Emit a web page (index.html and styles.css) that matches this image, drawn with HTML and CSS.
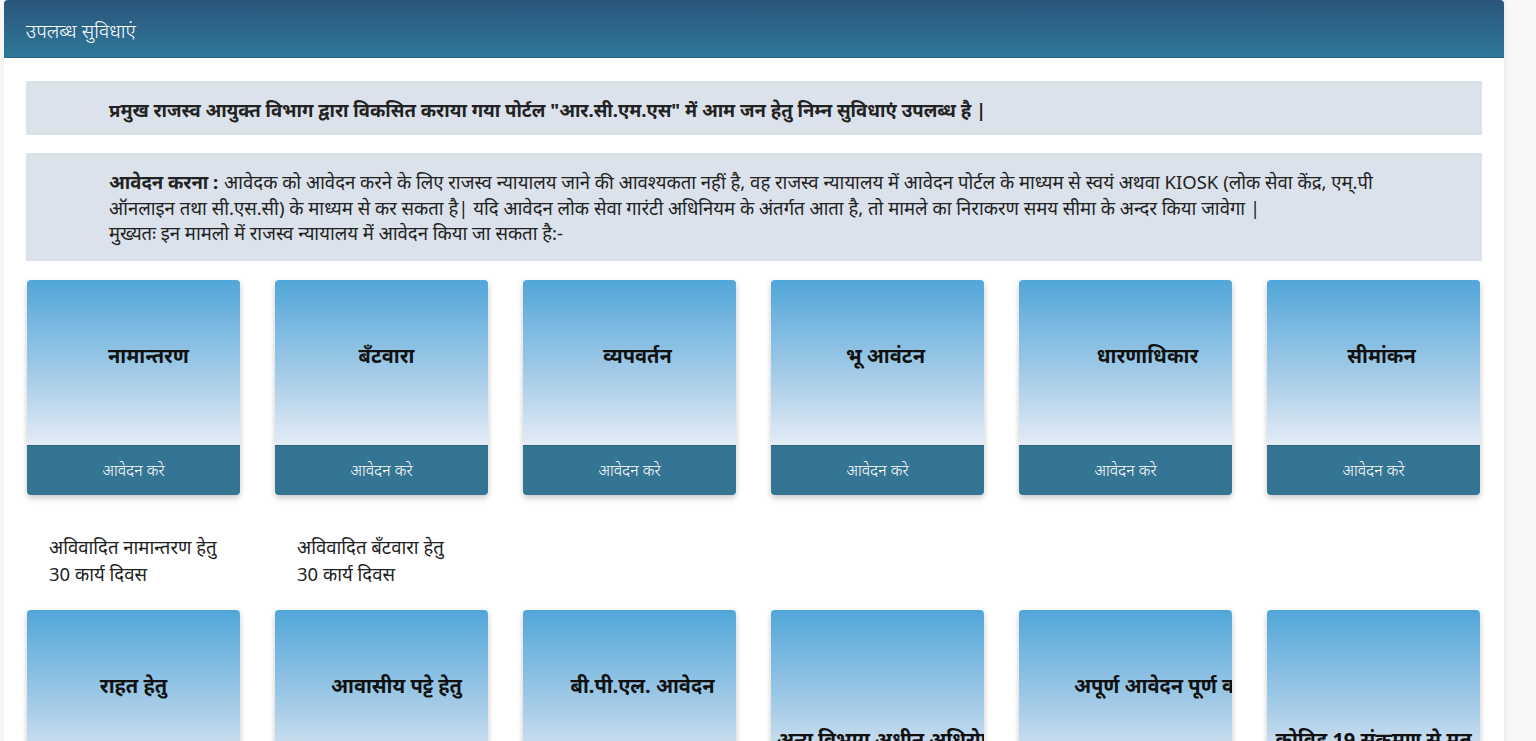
FILE: index.html
```html
<!DOCTYPE html>
<html lang="hi">
<head>
<meta charset="utf-8">
<title>उपलब्ध सुविधाएं</title>
<link rel="stylesheet" href="styles.css">
</head>
<body>
<div class="panel">
  <div class="panel-head">उपलब्ध सुविधाएं</div>
  <div class="panel-body">
    <div class="info info-title">
      <p>प्रमुख राजस्व आयुक्त विभाग द्वारा विकसित कराया गया पोर्टल "आर.सी.एम.एस" में आम जन हेतु निम्न सुविधाएं उपलब्ध है |</p>
    </div>
    <div class="info info-text">
      <p><b>आवेदन करना :</b> आवेदक को आवेदन करने के लिए राजस्व न्यायालय जाने की आवश्यकता नहीं है, वह राजस्व न्यायालय में आवेदन पोर्टल के माध्यम से स्वयं अथवा KIOSK (लोक सेवा केंद्र, एम्.पी ऑनलाइन तथा सी.एस.सी) के माध्यम से कर सकता है| यदि आवेदन लोक सेवा गारंटी अधिनियम के अंतर्गत आता है, तो मामले का निराकरण समय सीमा के अन्दर किया जावेगा |<br>मुख्यतः इन मामलो में राजस्व न्यायालय में आवेदन किया जा सकता है:-</p>
    </div>

    <div class="cards">
      <div class="item">
        <div class="card"><div class="card-top"><h3 class="card-title shift-l">नामान्तरण</h3></div><a class="card-btn">आवेदन करे</a></div>
        <p class="note">अविवादित नामान्तरण हेतु<br>30 कार्य दिवस</p>
      </div>
      <div class="item">
        <div class="card"><div class="card-top"><h3 class="card-title shift-s">बँटवारा</h3></div><a class="card-btn">आवेदन करे</a></div>
        <p class="note">अविवादित बँटवारा हेतु<br>30 कार्य दिवस</p>
      </div>
      <div class="item">
        <div class="card"><div class="card-top"><h3 class="card-title shift-m">व्यपवर्तन</h3></div><a class="card-btn">आवेदन करे</a></div>
      </div>
      <div class="item">
        <div class="card"><div class="card-top"><h3 class="card-title shift-m">भू आवंटन</h3></div><a class="card-btn">आवेदन करे</a></div>
      </div>
      <div class="item">
        <div class="card"><div class="card-top"><h3 class="card-title shift-xl">धारणाधिकार</h3></div><a class="card-btn">आवेदन करे</a></div>
      </div>
      <div class="item">
        <div class="card"><div class="card-top"><h3 class="card-title shift-m">सीमांकन</h3></div><a class="card-btn">आवेदन करे</a></div>
      </div>
    </div>

    <div class="cards row2">
      <div class="item">
        <div class="card"><div class="card-top"><h3 class="card-title">राहत हेतु</h3></div><a class="card-btn">आवेदन करे</a></div>
      </div>
      <div class="item">
        <div class="card"><div class="card-top"><h3 class="card-title shift-l">आवासीय पट्टे हेतु</h3></div><a class="card-btn">आवेदन करे</a></div>
      </div>
      <div class="item">
        <div class="card"><div class="card-top"><h3 class="card-title shift-ml">बी.पी.एल. आवेदन</h3></div><a class="card-btn">आवेदन करे</a></div>
      </div>
      <div class="item">
        <div class="card"><div class="card-top"><h3 class="card-title low left">अन्य विभाग अधीन अधिरोपण</h3></div><a class="card-btn">आवेदन करे</a></div>
      </div>
      <div class="item">
        <div class="card"><div class="card-top"><h3 class="card-title nowrap">अपूर्ण आवेदन पूर्ण करें</h3></div><a class="card-btn">आवेदन करे</a></div>
      </div>
      <div class="item">
        <div class="card"><div class="card-top"><h3 class="card-title low">कोविड 19 संक्रमण से मृत व्यक्ति</h3></div><a class="card-btn">आवेदन करे</a></div>
      </div>
    </div>
  </div>
</div>
</body>
</html>
```

FILE: styles.css
```css
html, body {
  margin: 0;
  padding: 0;
}
body {
  background: #f7f7f7;
  font-family: "Noto Sans", "Lato", sans-serif;
  color: #222;
  overflow: hidden;
}
.panel {
  margin-left: 4px;
  width: 1500px;
  background: #fff;
  border-radius: 4px 4px 0 0;
  box-shadow: 1px 0 4px rgba(0, 0, 0, 0.06);
  min-height: 760px;
}
.panel-head {
  height: 58px;
  box-sizing: border-box;
  padding: 18px 0 0 22px;
  background: linear-gradient(to bottom, #2a5479 0%, #2e789a 100%);
  border-bottom: 1px solid #2a6585;
  border-radius: 4px 4px 0 0;
  color: #fff;
  font-size: 19.5px;
  font-weight: 300;
  line-height: 26px;
}
.panel-body {
  padding: 23px 22px 0 22px;
}
.info {
  background: #dce2ec;
  padding: 0 0 0 83px;
}
.info p {
  margin: 0;
}
.info-title {
  height: 54px;
  display: flex;
  align-items: center;
  font-size: 18.5px;
  font-weight: 700;
  color: #222;
}
.info-title p {
  padding-top: 2px;
}
.info-text {
  margin-top: 18px;
  padding-top: 16px;
  padding-bottom: 15.5px;
  font-size: 18.5px;
  line-height: 25.5px;
  color: #222;
  padding-right: 90px;
}
.info-text b {
  font-weight: 700;
  margin-right: 1px;
}
.cards {
  display: grid;
  grid-template-columns: repeat(6, 213px);
  column-gap: 35px;
  margin-top: 19px;
  padding-left: 1px;
  height: 330px;
}
.row2 {
  margin-top: 0;
}
.card {
  border-radius: 4px;
  overflow: hidden;
  box-shadow: 0 3px 6px rgba(0, 0, 0, 0.22);
}
.card-top {
  height: 165px;
  background: linear-gradient(to bottom, #51a6d9 0%, #a8cde8 60%, #e4ecf6 100%);
  overflow: hidden;
}
.card-title {
  margin: 0;
  padding: 61px 0 0 0;
  width: 213px;
  box-sizing: border-box;
  text-align: center;
  font-size: 20px;
  line-height: 30px;
  font-weight: 700;
  color: #111;
}
.card-title.shift-s {
  padding-left: 10px;
}
.card-title.shift-m {
  padding-left: 16px;
}
.card-title.shift-ml {
  padding-left: 26px;
}
.card-title.shift-l {
  padding-left: 30px;
}
.card-title.shift-xl {
  padding-left: 44px;
}
.card-title.nowrap {
  white-space: nowrap;
  padding-left: 55px;
  text-align: left;
}
.card-title.low {
  padding-top: 115px;
  padding-left: 6px;
  padding-right: 6px;
}
.card-title.left {
  white-space: nowrap;
  text-align: left;
}
.card-btn {
  display: block;
  height: 50px;
  background: #337592;
  border-top: 1px solid #2b6680;
  box-sizing: border-box;
  color: #fff;
  text-align: center;
  font-size: 16px;
  font-weight: 300;
  line-height: 48px;
}
.note {
  margin: 38px 0 0 22px;
  font-size: 18.5px;
  line-height: 27px;
  color: #222;
  font-weight: 400;
}
```
